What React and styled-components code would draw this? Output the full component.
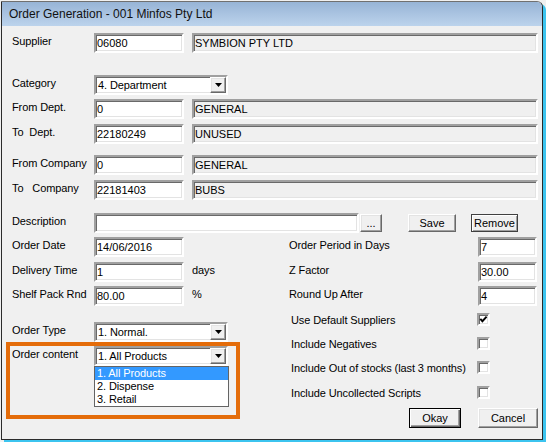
import React from 'react';
import styled, { createGlobalStyle, css } from 'styled-components';

const GlobalStyle = createGlobalStyle`
  html, body {
    margin: 0;
    padding: 0;
    background: #f0f0f0;
  }
  body {
    font-family: "Liberation Sans", Arial, sans-serif;
    font-size: 11px;
    letter-spacing: -0.1px;
    color: #000;
  }
  * {
    box-sizing: border-box;
  }
`;

const sunken = css`
  border-style: solid;
  border-width: 2px;
  border-color: #a0a0a0 #ffffff #ffffff #a0a0a0;
  box-shadow: inset 1px 1px 0 #696969, inset -1px -1px 0 #e3e3e3;
`;

const raised = css`
  border-style: solid;
  border-width: 1px;
  border-color: #ffffff #696969 #696969 #ffffff;
  box-shadow: inset -1px -1px 0 #a0a0a0, inset 1px 1px 0 #e3e3e3;
`;

const Screen = styled.div`
  width: 546px;
  height: 442px;
  padding: 1px 0 0 1px;
  overflow: hidden;
  background: #f0f0f0;
`;

const Window = styled.div`
  position: relative;
  width: 542px;
  height: 439px;
  border: 1px solid #2b2b2b;
  border-top-color: #707070;
  border-top-right-radius: 6px;
  box-shadow: 3px 3px 0 #3cc4ef;
  background: #f0f0f0;
  display: flex;
  flex-direction: column;
`;

const TitleBar = styled.div`
  height: 24px;
  flex: none;
  display: flex;
  align-items: center;
  padding-left: 7px;
  background: linear-gradient(#97b4d6, #bcd3ec);
  border-top-right-radius: 5px;
  font-size: 12px;
  letter-spacing: 0;
  color: #111;
`;

const Body = styled.div`
  flex: 1;
  padding: 7px 4px 0 10px;
`;

const Row = styled.div`
  display: flex;
  align-items: center;
  height: ${p => p.$h || 20}px;
  margin-top: ${p => p.$mt || 0}px;
  padding-left: ${p => p.$indent || 0}px;
`;

const Label = styled.div`
  width: ${p => p.$w || 82}px;
  flex: none;
  height: 20px;
  line-height: 17px;
  white-space: nowrap;
`;

const Field = styled.input`
  ${sunken};
  width: ${p => (p.$w ? `${p.$w}px` : 'auto')};
  flex: ${p => (p.$w ? 'none' : '1')};
  min-width: 0;
  height: 20px;
  margin: 0 0 0 ${p => p.$ml || 0}px;
  padding: 0 1px;
  font: inherit;
  color: #000;
  background: ${p => (p.readOnly ? '#f0f0f0' : '#ffffff')};
  outline: none;
`;

const Unit = styled.span`
  margin-left: 8px;
  line-height: 17px;
  height: 20px;
`;

const ComboWrap = styled.div`
  position: relative;
  flex: none;
`;

const Combo = styled.div`
  ${sunken};
  width: 134px;
  height: 20px;
  display: flex;
  background: #fff;
`;

const ComboText = styled.span`
  flex: 1;
  padding-left: 2px;
  line-height: 16px;
  white-space: nowrap;
`;

const ArrowButton = styled.div`
  ${raised};
  width: 16px;
  height: 16px;
  background: #f0f0f0;
  display: flex;
  align-items: center;
  justify-content: center;
`;

const DropList = styled.ul`
  position: absolute;
  top: 20px;
  left: 0;
  width: 135px;
  margin: 0;
  padding: 0;
  list-style: none;
  background: #fff;
  border: 1px solid #646464;
  z-index: 2;
`;

const DropItem = styled.li`
  height: 13px;
  line-height: 13px;
  padding-left: 2px;
  white-space: nowrap;
  background: ${p => (p.$active ? '#3399ff' : 'transparent')};
  color: ${p => (p.$active ? '#fff' : '#000')};
`;

const Button = styled.button`
  ${raised};
  width: ${p => p.$w}px;
  height: ${p => p.$h || 18}px;
  margin: 0 0 0 ${p => p.$ml || 0}px;
  padding: 0;
  flex: none;
  background: #f0f0f0;
  font: inherit;
  color: #000;
  ${p => p.$framed && css`
    border-color: #404040 #404040 #404040 #404040;
    box-shadow: inset 1px 1px 0 #fff, inset -1px -1px 0 #a0a0a0;
  `}
  ${p => p.$default && css`
    border: 1px solid #000;
    box-shadow: inset 1px 1px 0 #fff, inset -1px -1px 0 #696969, inset -2px -2px 0 #a0a0a0;
  `}
`;

const Lower = styled.div`
  display: grid;
  grid-template-columns: 277px 1fr;
  margin-top: 4px;
`;

const Column = styled.div`
  display: flex;
  flex-direction: column;
`;

const CheckLabel = styled.div`
  width: 186px;
  flex: none;
  white-space: nowrap;
`;

const CheckBox = styled.div`
  ${sunken};
  width: 13px;
  height: 13px;
  background: #fff;
  display: flex;
  align-items: center;
  justify-content: center;
`;

const ButtonBar = styled.div`
  display: flex;
  justify-content: flex-end;
  gap: 17px;
  margin-top: 9px;
`;

const Callout = styled.div`
  position: absolute;
  left: 4px;
  top: 340px;
  width: 234px;
  height: 77px;
  border: 4px solid #e46c0a;
  pointer-events: none;
  z-index: 3;
`;

const DownArrow = () => (
  <svg width="7" height="4" viewBox="0 0 7 4">
    <polygon points="0,0 7,0 3.5,4" fill="#000" />
  </svg>
);

const Tick = () => (
  <svg width="9" height="9" viewBox="0 0 9 9">
    <polyline points="1.3,3.8 3.4,6.2 7.6,1.6" fill="none" stroke="#000" strokeWidth="1.9" />
  </svg>
);

const Select = ({ value, children }) => (
  <ComboWrap>
    <Combo>
      <ComboText>{value}</ComboText>
      <ArrowButton>
        <DownArrow />
      </ArrowButton>
    </Combo>
    {children}
  </ComboWrap>
);

const options = ['1. All Products', '2. Dispense', '3. Retail'];

const rightFields = [
  { label: 'Order Period in Days', value: '7', mt: 0 },
  { label: 'Z Factor', value: '30.00', mt: 5 },
  { label: 'Round Up After', value: '4', mt: 4 },
];

const checks = [
  { label: 'Use Default Suppliers', checked: true, mt: 7 },
  { label: 'Include Negatives', checked: false, mt: 11 },
  { label: 'Include Out of stocks (last 3 months)', checked: false, mt: 11 },
  { label: 'Include Uncollected Scripts', checked: false, mt: 12 },
];

export default function App() {
  return (
    <Screen>
      <GlobalStyle />
      <Window>
        <TitleBar>Order Generation - 001 Minfos Pty Ltd</TitleBar>
        <Body>
          <Row>
            <Label>Supplier</Label>
            <Field $w={90} defaultValue="06080" />
            <Field readOnly $ml={8} defaultValue="SYMBION PTY LTD" />
          </Row>

          <Row $mt={22}>
            <Label>Category</Label>
            <Select value="4. Department" />
          </Row>
          <Row $mt={4}>
            <Label>From Dept.</Label>
            <Field $w={90} defaultValue="0" />
            <Field readOnly $ml={8} defaultValue="GENERAL" />
          </Row>
          <Row $mt={5}>
            <Label>To&nbsp; Dept.</Label>
            <Field $w={90} defaultValue="22180249" />
            <Field readOnly $ml={8} defaultValue="UNUSED" />
          </Row>

          <Row $mt={11}>
            <Label>From Company</Label>
            <Field $w={90} defaultValue="0" />
            <Field readOnly $ml={8} defaultValue="GENERAL" />
          </Row>
          <Row $mt={5}>
            <Label>To&nbsp;&nbsp; Company</Label>
            <Field $w={90} defaultValue="22181403" />
            <Field readOnly $ml={8} defaultValue="BUBS" />
          </Row>

          <Row $mt={13}>
            <Label>Description</Label>
            <Field $w={265} defaultValue="" />
            <Button $w={22} $ml={1}>...</Button>
            <Button $w={48} $ml={26}>Save</Button>
            <Button $w={47} $ml={15} $framed>Remove</Button>
          </Row>

          <Lower>
            <Column>
              <Row>
                <Label>Order Date</Label>
                <Field $w={90} defaultValue="14/06/2016" />
              </Row>
              <Row $mt={5}>
                <Label>Delivery Time</Label>
                <Field $w={90} defaultValue="1" />
                <Unit>days</Unit>
              </Row>
              <Row $mt={4}>
                <Label>Shelf Pack Rnd</Label>
                <Field $w={90} defaultValue="80.00" />
                <Unit>%</Unit>
              </Row>
              <Row $mt={16}>
                <Label>Order Type</Label>
                <Select value="1. Normal." />
              </Row>
              <Row $mt={4}>
                <Label>Order content</Label>
                <Select value="1. All Products">
                  <DropList>
                    {options.map((o, i) => (
                      <DropItem key={o} $active={i === 0}>{o}</DropItem>
                    ))}
                  </DropList>
                </Select>
              </Row>
            </Column>

            <Column>
              {rightFields.map(f => (
                <Row key={f.label} $mt={f.mt}>
                  <Label $w={189}>{f.label}</Label>
                  <Field $w={59} defaultValue={f.value} />
                </Row>
              ))}
              {checks.map(c => (
                <Row key={c.label} $h={13} $mt={c.mt} $indent={2}>
                  <CheckLabel>{c.label}</CheckLabel>
                  <CheckBox>{c.checked && <Tick />}</CheckBox>
                </Row>
              ))}
              <ButtonBar>
                <Button $w={52} $h={20} $default>Okay</Button>
                <Button $w={60} $h={20}>Cancel</Button>
              </ButtonBar>
            </Column>
          </Lower>
        </Body>
        <Callout />
      </Window>
    </Screen>
  );
}
